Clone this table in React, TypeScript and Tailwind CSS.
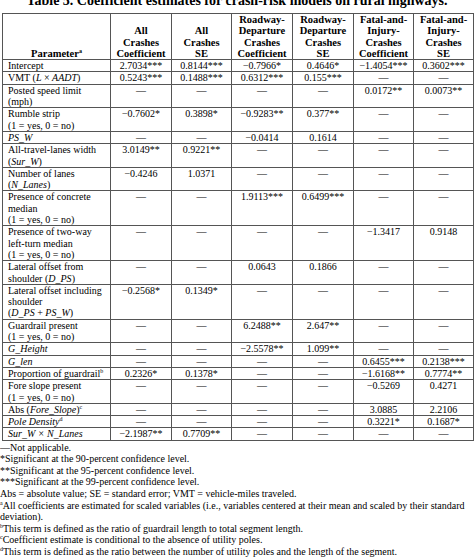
import type { ReactNode } from "react"

const D = "—"

type Row = { param: ReactNode; values: string[] }

const yesNo = "(1 = yes, 0 = no)"

function Sup({ children }: { children: ReactNode }) {
  return <span className="align-top text-[6px] leading-none">{children}</span>
}

const rows: Row[] = [
  { param: <>Intercept</>, values: ["2.7034***", "0.8144***", "−0.7966*", "0.4646*", "−1.4054***", "0.3602***"] },
  {
    param: (
      <>
        VMT (<i>L</i> × <i>AADT</i>)
      </>
    ),
    values: ["0.5243***", "0.1488***", "0.6312***", "0.155***", D, D],
  },
  {
    param: (
      <>
        Posted speed limit
        <br />
        (mph)
      </>
    ),
    values: [D, D, D, D, "0.0172**", "0.0073**"],
  },
  {
    param: (
      <>
        Rumble strip
        <br />
        {yesNo}
      </>
    ),
    values: ["−0.7602*", "0.3898*", "−0.9283**", "0.377**", D, D],
  },
  { param: <i>PS_W</i>, values: [D, D, "−0.0414", "0.1614", D, D] },
  {
    param: (
      <>
        All-travel-lanes width
        <br />(<i>Sur_W</i>)
      </>
    ),
    values: ["3.0149**", "0.9221**", D, D, D, D],
  },
  {
    param: (
      <>
        Number of lanes
        <br />(<i>N_Lanes</i>)
      </>
    ),
    values: ["−0.4246", "1.0371", D, D, D, D],
  },
  {
    param: (
      <>
        Presence of concrete
        <br />
        median
        <br />
        {yesNo}
      </>
    ),
    values: [D, D, "1.9113***", "0.6499***", D, D],
  },
  {
    param: (
      <>
        Presence of two-way
        <br />
        left-turn median
        <br />
        {yesNo}
      </>
    ),
    values: [D, D, D, D, "−1.3417", "0.9148"],
  },
  {
    param: (
      <>
        Lateral offset from
        <br />
        shoulder (<i>D_PS</i>)
      </>
    ),
    values: [D, D, "0.0643", "0.1866", D, D],
  },
  {
    param: (
      <>
        Lateral offset including
        <br />
        shoulder
        <br />(<i>D_PS</i> + <i>PS_W</i>)
      </>
    ),
    values: ["−0.2568*", "0.1349*", D, D, D, D],
  },
  {
    param: (
      <>
        Guardrail present
        <br />
        {yesNo}
      </>
    ),
    values: [D, D, "6.2488**", "2.647**", D, D],
  },
  { param: <i>G_Height</i>, values: [D, D, "−2.5578**", "1.099**", D, D] },
  { param: <i>G_len</i>, values: [D, D, D, D, "0.6455***", "0.2138***"] },
  {
    param: (
      <>
        Proportion of guardrail<Sup>b</Sup>
      </>
    ),
    values: ["0.2326*", "0.1378*", D, D, "−1.6168**", "0.7774**"],
  },
  {
    param: (
      <>
        Fore slope present
        <br />
        {yesNo}
      </>
    ),
    values: [D, D, D, D, "−0.5269", "0.4271"],
  },
  {
    param: (
      <>
        Abs (<i>Fore_Slope</i>)<Sup>c</Sup>
      </>
    ),
    values: [D, D, D, D, "3.0885", "2.2106"],
  },
  {
    param: (
      <>
        <i>Pole Density</i>
        <Sup>d</Sup>
      </>
    ),
    values: [D, D, D, D, "0.3221*", "0.1687*"],
  },
  {
    param: <i>Sur_W × N_Lanes</i>,
    values: ["−2.1987**", "0.7709**", D, D, D, D],
  },
]

const headers = [
  ["All", "Crashes", "Coefficient"],
  ["All", "Crashes", "SE"],
  ["Roadway-", "Departure", "Crashes", "Coefficient"],
  ["Roadway-", "Departure", "Crashes", "SE"],
  ["Fatal-and-", "Injury-", "Crashes", "Coefficient"],
  ["Fatal-and-", "Injury-", "Crashes", "SE"],
]

const notes: ReactNode[] = [
  <>—Not applicable.</>,
  <>*Significant at the 90-percent confidence level.</>,
  <>**Significant at the 95-percent confidence level.</>,
  <>***Significant at the 99-percent confidence level.</>,
  <>Abs = absolute value; SE = standard error; VMT = vehicle-miles traveled.</>,
  <>
    <Sup>a</Sup>All coefficients are estimated for scaled variables (i.e., variables centered at their mean and scaled by
    their standard deviation).
  </>,
  <>
    <Sup>b</Sup>This term is defined as the ratio of guardrail length to total segment length.
  </>,
  <>
    <Sup>c</Sup>Coefficient estimate is conditional to the absence of utility poles.
  </>,
  <>
    <Sup>d</Sup>This term is defined as the ratio between the number of utility poles and the length of the segment.
  </>,
]

export default function App() {
  return (
    <main className="min-h-screen w-[474px] overflow-hidden bg-white text-black [font-family:'Liberation_Serif',serif]">
      {/* title is cropped at the top in the screenshot */}
      <h1 className="-mt-[6px] text-center text-[14px] font-bold leading-[14px]">
        Table 5. Coefficient estimates for crash-risk models on rural highways.
      </h1>

      <div className="mt-[5px] pl-[2px]">
        <table className="w-[471px] table-fixed border-collapse text-[10px] leading-[11.3px]">
          <colgroup>
            <col className="w-[108px]" />
            <col className="w-[61px]" />
            <col className="w-[60px]" />
            <col className="w-[61px]" />
            <col className="w-[61px]" />
            <col className="w-[60px]" />
            <col className="w-[60px]" />
          </colgroup>
          <thead>
            <tr>
              <th className="border border-[#555] px-[5px] text-center align-bottom text-[10.5px] font-bold">
                Parameter<Sup>a</Sup>
              </th>
              {headers.map((h, i) => (
                <th key={i} className="border border-[#555] px-0 text-center align-bottom text-[10.5px] font-bold">
                  {h.map((line) => (
                    <div key={line}>{line}</div>
                  ))}
                </th>
              ))}
            </tr>
          </thead>
          <tbody>
            {rows.map((row, i) => (
              <tr key={i}>
                <td className="whitespace-nowrap border border-[#555] px-[5px] text-left align-top">{row.param}</td>
                {row.values.map((v, j) => (
                  <td key={j} className="whitespace-nowrap border border-[#555] px-0 text-center align-top">
                    {v}
                  </td>
                ))}
              </tr>
            ))}
          </tbody>
        </table>
      </div>

      {/* footnotes */}
      <div className="mt-[1px] text-[10px] leading-[11.6px]">
        {notes.map((n, i) => (
          <p key={i}>{n}</p>
        ))}
      </div>
    </main>
  )
}
